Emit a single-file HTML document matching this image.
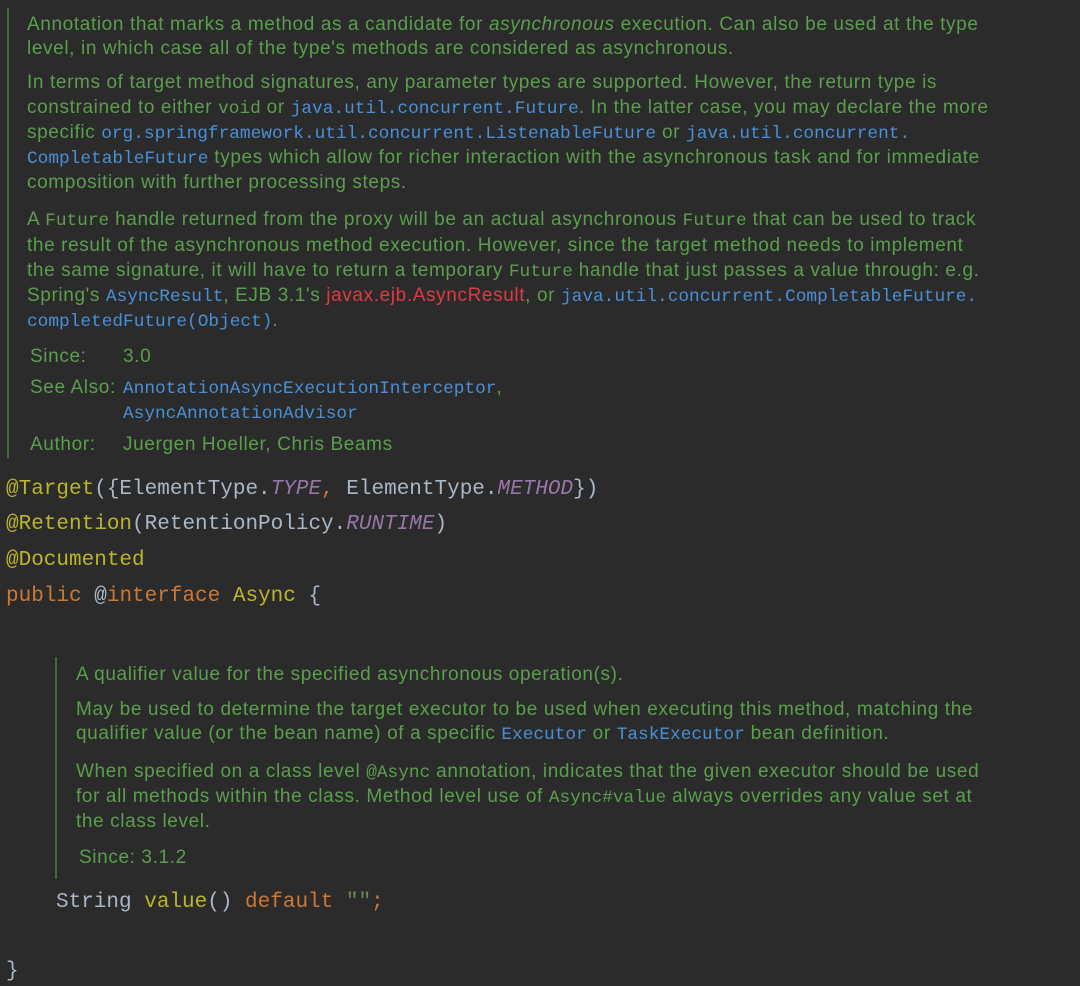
<!DOCTYPE html>
<html><head><meta charset="utf-8"><style>
body{margin:0;width:1080px;height:986px;background:#2b2b2b;overflow:hidden;position:relative;font-family:"Liberation Sans",sans-serif}
.l{position:absolute;white-space:nowrap;font-size:19px;letter-spacing:0.62px;color:#5b9e4d;line-height:20px}
.m{font-family:"Liberation Mono",monospace;font-size:17.8px;letter-spacing:0;color:#4a8fd6}
.mg{font-family:"Liberation Mono",monospace;font-size:17.8px;letter-spacing:0}
.r{color:#e0393e}
.c{position:absolute;white-space:nowrap;font-family:"Liberation Mono",monospace;font-size:21px;color:#a9b7c6;line-height:24px}
.an{color:#bbb529}.kw{color:#cc7832}.pu{color:#9876aa;font-style:italic}
.bar{position:absolute;width:2px;background:#3f6b3a}
</style></head><body>
<div class="bar" style="left:7px;top:8px;height:450px"></div>
<div class="l" style="left:27px;top:15px">Annotation that marks a method as a candidate for <i>asynchronous</i> execution. Can also be used at the type</div>
<div class="l" style="left:27px;top:39px">level, in which case all of the type's methods are considered as asynchronous.</div>
<div class="l" style="left:27px;top:73px">In terms of target method signatures, any parameter types are supported. However, the return type is</div>
<div class="l" style="left:27px;top:98px">constrained to either <span class="mg">void</span> or <span class="m">java.util.concurrent.Future</span>. In the latter case, you may declare the more</div>
<div class="l" style="left:27px;top:123px">specific <span class="m">org.springframework.util.concurrent.ListenableFuture</span> or <span class="m">java.util.concurrent.</span></div>
<div class="l" style="left:27px;top:148px"><span class="m">CompletableFuture</span> types which allow for richer interaction with the asynchronous task and for immediate</div>
<div class="l" style="left:27px;top:173px">composition with further processing steps.</div>
<div class="l" style="left:27px;top:210px">A <span class="mg">Future</span> handle returned from the proxy will be an actual asynchronous <span class="mg">Future</span> that can be used to track</div>
<div class="l" style="left:27px;top:236px">the result of the asynchronous method execution. However, since the target method needs to implement</div>
<div class="l" style="left:27px;top:261px">the same signature, it will have to return a temporary <span class="mg">Future</span> handle that just passes a value through: e.g.</div>
<div class="l" style="left:27px;top:286px">Spring's <span class="m">AsyncResult</span>, EJB 3.1's <span class="r">javax.ejb.AsyncResult</span>, or <span class="m">java.util.concurrent.CompletableFuture.</span></div>
<div class="l" style="left:27px;top:311px"><span class="m">completedFuture(Object)</span>.</div>
<div class="l" style="left:30px;top:347px">Since:</div><div class="l" style="left:123px;top:347px">3.0</div>
<div class="l" style="left:30px;top:378px">See Also:</div><div class="l" style="left:123px;top:378px"><span class="m">AnnotationAsyncExecutionInterceptor</span>,</div>
<div class="l" style="left:123px;top:403px"><span class="m">AsyncAnnotationAdvisor</span></div>
<div class="l" style="left:30px;top:435px">Author:</div><div class="l" style="left:123px;top:435px">Juergen Hoeller, Chris Beams</div>

<div class="c" style="left:6px;top:478px"><span class="an">@Target</span>({ElementType.<span class="pu">TYPE</span><span class="kw">,</span> ElementType.<span class="pu">METHOD</span>})</div>
<div class="c" style="left:6px;top:513px"><span class="an">@Retention</span>(RetentionPolicy.<span class="pu">RUNTIME</span>)</div>
<div class="c" style="left:6px;top:549px"><span class="an">@Documented</span></div>
<div class="c" style="left:6px;top:585px"><span class="kw">public</span> @<span class="kw">interface</span> <span class="an">Async</span> {</div>

<div class="bar" style="left:55px;top:657px;height:222px"></div>
<div class="l" style="left:76px;top:665px">A qualifier value for the specified asynchronous operation(s).</div>
<div class="l" style="left:76px;top:700px">May be used to determine the target executor to be used when executing this method, matching the</div>
<div class="l" style="left:76px;top:724px">qualifier value (or the bean name) of a specific <span class="m">Executor</span> or <span class="m">TaskExecutor</span> bean definition.</div>
<div class="l" style="left:76px;top:762px">When specified on a class level <span class="mg">@Async</span> annotation, indicates that the given executor should be used</div>
<div class="l" style="left:76px;top:787px">for all methods within the class. Method level use of <span class="mg">Async#value</span> always overrides any value set at</div>
<div class="l" style="left:76px;top:812px">the class level.</div>
<div class="l" style="left:79px;top:848px">Since: 3.1.2</div>

<div class="c" style="left:56px;top:891px">String <span class="an">value</span>() <span class="kw">default</span> <span style="color:#6a8759">""</span><span class="kw">;</span></div>
<div class="c" style="left:6px;top:960px">}</div>
</body></html>
